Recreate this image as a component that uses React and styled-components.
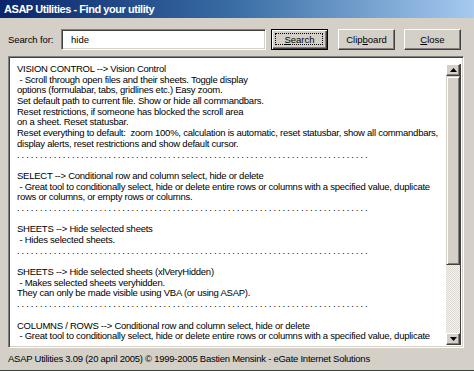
import React from "react";
import styled, { createGlobalStyle } from "styled-components";

const Global = createGlobalStyle`
  html, body { margin: 0; padding: 0; background: #d4d0c8; }
  body { font-family: "Liberation Sans", Arial, sans-serif; }
`;

const Window = styled.div`
  width: 474px;
  height: 371px;
  box-sizing: border-box;
  background: #d4d0c8;
  display: flex;
  flex-direction: column;
  border-bottom: 1px solid #404040;
  overflow: hidden;
`;

const TitleBar = styled.div`
  height: 18px;
  flex: none;
  background: linear-gradient(to right, #0a246a 0%, #3a6ea5 50%, #a6caf0 100%);
  color: #fff;
  font-weight: bold;
  font-size: 11px;
  letter-spacing: -0.45px;
  display: flex;
  align-items: center;
  padding-left: 4px;
`;

const SearchRow = styled.div`
  display: flex;
  align-items: center;
  padding: 11px 0 0 8px;
  height: 21px;
`;

const Label = styled.span`
  font-size: 9.5px;
  letter-spacing: -0.1px;
  color: #000;
  width: 53px;
`;

const Input = styled.div`
  width: 205px;
  height: 21px;
  box-sizing: border-box;
  background: #fff;
  border-top: 1px solid #808080;
  border-left: 1px solid #808080;
  border-right: 1px solid #fff;
  border-bottom: 1px solid #fff;
  box-shadow: inset 1px 1px 0 #404040, inset -1px -1px 0 #d4d0c8;
  font-size: 9.5px;
  display: flex;
  align-items: center;
  padding-left: 9px;
  margin-right: 5px;
`;

const Button = styled.div`
  width: 57px;
  height: 21px;
  box-sizing: border-box;
  margin-right: ${(p) => p.$gap || 0}px;
  background: #d4d0c8;
  font-size: 9.5px;
  display: flex;
  align-items: center;
  justify-content: center;
  position: relative;
  border: 1px solid ${(p) => (p.$default ? "#000" : "#fff")};
  ${(p) =>
    p.$default
      ? `box-shadow: inset 1px 1px 0 #fff, inset -1px -1px 0 #404040, inset -2px -2px 0 #808080;`
      : `border-right-color:#404040;border-bottom-color:#404040;box-shadow: inset -1px -1px 0 #808080;`}
`;

const Focus = styled.span`
  position: absolute;
  inset: 3px 4px 4px 3px;
  border: 1px dotted #000;
`;

const Ul = styled.span`
  text-decoration: underline;
`;

const ContentBox = styled.div`
  margin: 6px 0 0 8px;
  width: 456px;
  height: 292px;
  box-sizing: border-box;
  background: #fff;
  border-top: 1px solid #808080;
  border-left: 1px solid #808080;
  border-right: 1px solid #fff;
  border-bottom: 1px solid #fff;
  box-shadow: inset 1px 1px 0 #404040, inset -1px -1px 0 #d4d0c8;
  display: flex;
  padding: 7px 2px 2px 8px;
  overflow: hidden;
`;

const TextArea = styled.div`
  flex: 1;
  font-size: 9.5px;
  line-height: 10.7px;
  letter-spacing: -0.25px;
  color: #000;
  white-space: pre;
  overflow: hidden;
`;

const Line = styled.div`
  height: 10.7px;
`;

const Dots = styled.div`
  height: 10.7px;
  letter-spacing: -0.35px;
  color: #000;
`;

const ScrollBar = styled.div`
  width: 14px;
  flex: none;
  display: flex;
  flex-direction: column;
  border-right: 1px solid #404040;
`;

const ArrowBtn = styled.div`
  height: 12px;
  flex: none;
  box-sizing: border-box;
  background: #d4d0c8;
  border-top: 1px solid #fff;
  border-left: 1px solid #fff;
  border-right: 1px solid #404040;
  border-bottom: 1px solid #404040;
  box-shadow: inset -1px -1px 0 #808080;
  display: flex;
  align-items: center;
  justify-content: center;
`;

const Thumb = styled.div`
  height: 189px;
  flex: none;
  box-sizing: border-box;
  background: #d4d0c8;
  border-top: 1px solid #d4d0c8;
  border-left: 1px solid #d4d0c8;
  border-right: 1px solid #404040;
  border-bottom: 1px solid #404040;
  box-shadow: inset 1px 1px 0 #fff, inset -1px -1px 0 #808080;
`;

const Track = styled.div`
  flex: 1;
  background-color: #ebe9e4;
  background-image: repeating-conic-gradient(#dcd9d2 0 25%, #f4f3ef 0 50%);
  background-size: 2px 2px;
`;

const Status = styled.div`
  font-size: 9.5px;
  letter-spacing: -0.25px;
  padding: 5px 0 0 8px;
  color: #000;
`;

const Arrow = ({ up }) => (
  <svg width="7" height="4" viewBox="0 0 7 4">
    <path d={up ? "M3.5 0 L7 4 L0 4 Z" : "M0 0 L7 0 L3.5 4 Z"} fill="#000" />
  </svg>
);

const DOTS = Array(77).fill(".").join(" ");

const blocks = [
  [
    "VISION CONTROL --> Vision Control",
    " - Scroll through open files and their sheets. Toggle display",
    "options (formulabar, tabs, gridlines etc.) Easy zoom.",
    "Set default path to current file. Show or hide all commandbars.",
    "Reset restrictions, if someone has blocked the scroll area",
    "on a sheet. Reset statusbar.",
    "Reset everything to default:  zoom 100%, calculation is automatic, reset statusbar, show all commandbars,",
    "display alerts, reset restrictions and show default cursor.",
  ],
  [
    "SELECT --> Conditional row and column select, hide or delete",
    " - Great tool to conditionally select, hide or delete entire rows or columns with a specified value, duplicate",
    "rows or columns, or empty rows or columns.",
  ],
  ["SHEETS --> Hide selected sheets", " - Hides selected sheets."],
  [
    "SHEETS --> Hide selected sheets (xlVeryHidden)",
    " - Makes selected sheets veryhidden.",
    "They can only be made visible using VBA (or using ASAP).",
  ],
  [
    "COLUMNS / ROWS --> Conditional row and column select, hide or delete",
    " - Great tool to conditionally select, hide or delete entire rows or columns with a specified value, duplicate",
  ],
];

export default function App() {
  return (
    <>
      <Global />
      <Window>
        <TitleBar>ASAP Utilities - Find your utility</TitleBar>
        <SearchRow>
          <Label>Search for:</Label>
          <Input>hide</Input>
          <Button $default $gap={10}>
            <Focus />
            <span>
              <Ul>S</Ul>earch
            </span>
          </Button>
          <Button $gap={9}>
            <span>
              Clip<Ul>b</Ul>oard
            </span>
          </Button>
          <Button>
            <span>
              <Ul>C</Ul>lose
            </span>
          </Button>
        </SearchRow>
        <ContentBox>
          <TextArea>
            {blocks.map((b, i) => (
              <React.Fragment key={i}>
                {b.map((l, j) => (
                  <Line key={j}>{l}</Line>
                ))}
                {i < blocks.length - 1 && (
                  <>
                    <Dots>{DOTS}</Dots>
                    <Line />
                  </>
                )}
              </React.Fragment>
            ))}
          </TextArea>
          <ScrollBar>
            <ArrowBtn>
              <Arrow up />
            </ArrowBtn>
            <Thumb />
            <Track />
            <ArrowBtn>
              <Arrow />
            </ArrowBtn>
          </ScrollBar>
        </ContentBox>
        <Status>
          ASAP Utilities 3.09 (20 april 2005) © 1999-2005 Bastien Mensink - eGate Internet Solutions
        </Status>
      </Window>
    </>
  );
}
